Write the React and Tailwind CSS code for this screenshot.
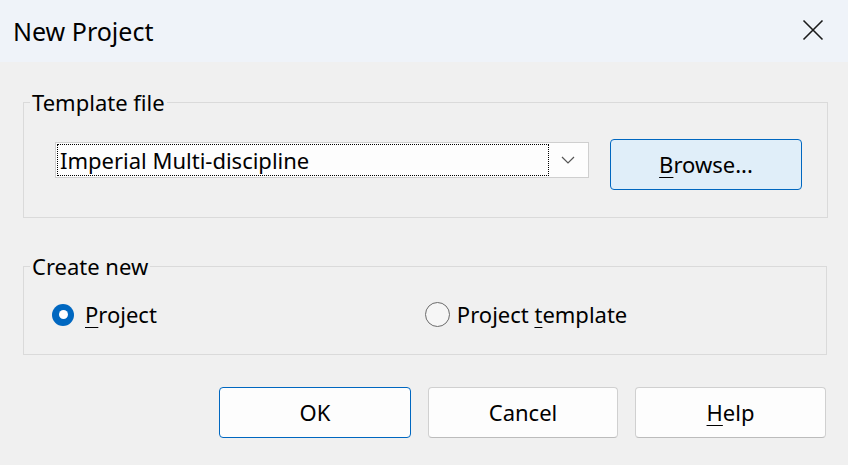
export default function App() {
  const font = { fontFamily: '"Noto Sans", "Open Sans", sans-serif' };
  return (
    <div className="w-[848px] h-[465px] bg-[#f0f0f0] flex flex-col text-black overflow-hidden" style={font}>
      <div className="h-[62px] bg-[#eff3f9] flex items-center justify-between pl-[13px] pr-[24px] shrink-0">
        <span className="text-[25px] leading-none tracking-[0px] mt-[1px]">New Project</span>
        <svg width="22" height="22" viewBox="0 0 22 22" className="mt-[-2px]">
          <path d="M1.5 1.5 L20.5 20.5 M20.5 1.5 L1.5 20.5" stroke="#1a1a1a" strokeWidth="1.6" fill="none" />
        </svg>
      </div>

      <fieldset className="mx-[23px] mt-[28px] w-[805px] h-[128px] border border-[#dadada] pl-[6px] pr-0 pb-0">
        <legend className="text-[22px] leading-[24px] px-[2px]">Template file</legend>
        <div className="flex items-start mt-[15px]">
          <div className="ml-[25px] mt-[13px] w-[534px] h-[36px] bg-[#fdfdfd] border border-[#cfcfcf] flex items-center p-[1px]">
            <div className="flex-1 h-full border border-dotted border-black flex items-center pl-[2px] text-[22px]">
              Imperial Multi-discipline
            </div>
            <div className="w-[38px] flex items-center justify-center">
              <svg width="14" height="8" viewBox="0 0 14 8">
                <path d="M1 1 L7 7 L13 1" stroke="#555" strokeWidth="1.2" fill="none" />
              </svg>
            </div>
          </div>
          <button className="ml-[21px] mt-[10px] w-[192px] h-[51px] bg-[#e0eef9] border border-[#0067c0] rounded-[4px] text-[22px] flex items-center justify-center">
            <span><span className="underline underline-offset-[4px] decoration-1">B</span>rowse...</span>
          </button>
        </div>
      </fieldset>

      <fieldset className="mx-[23px] mt-[36px] w-[804px] h-[101px] border border-[#dadada] pl-[6px] pr-0 pb-0">
        <legend className="text-[22px] leading-[24px] px-[2px]">Create new</legend>
        <div className="flex items-center mt-[20px] text-[22px]">
          <div className="ml-[22px] w-[22px] h-[22px] rounded-full bg-[#0067c0] flex items-center justify-center">
            <div className="w-[9px] h-[9px] rounded-full bg-white" />
          </div>
          <span className="ml-[11px]"><span className="underline underline-offset-[4px] decoration-1">P</span>roject</span>
          <div className="ml-[268px] w-[25px] h-[25px] rounded-full border-[1.5px] border-[#6b6b6b] bg-[#f6f6f6]" />
          <span className="ml-[7px]">Project <span className="underline underline-offset-[4px] decoration-1">t</span>emplate</span>
        </div>
      </fieldset>

      <div className="flex justify-end gap-[17px] pr-[22px] mt-[32px] text-[22px]">
        <button className="w-[192px] h-[51px] bg-[#fdfdfd] border border-[#0067c0] rounded-[4px]">OK</button>
        <button className="w-[190px] h-[51px] bg-[#fdfdfd] border border-[#d0d0d0] border-b-[#bcbcbc] rounded-[4px]">Cancel</button>
        <button className="w-[191px] h-[51px] bg-[#fdfdfd] border border-[#d0d0d0] border-b-[#bcbcbc] rounded-[4px]">
          <span className="underline underline-offset-[4px] decoration-1">H</span>elp
        </button>
      </div>
    </div>
  );
}
